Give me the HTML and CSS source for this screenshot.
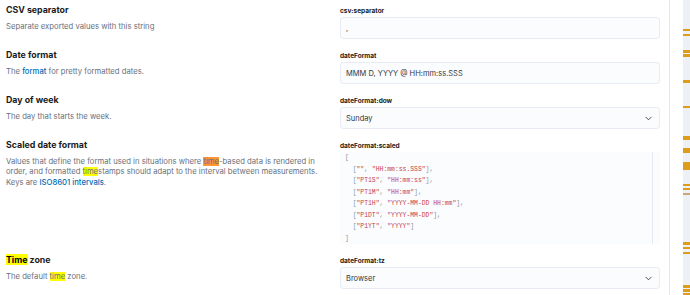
FILE: index.html
```html
<!DOCTYPE html>
<html lang="en">

<head>
    <meta charset="utf-8">
    <title>Advanced settings</title>
    <link rel="stylesheet" href="styles.css">
</head>

<body>
    <div class="page">
        <!-- settings list -->
        <div class="settings">

            <div class="row">
                <div class="info">
                    <h3 class="title">CSV separator</h3>
                    <p class="desc">Separate exported values with this string</p>
                </div>
                <div class="field">
                    <label class="label">csv:separator</label>
                    <div class="input">,</div>
                </div>
            </div>

            <div class="row">
                <div class="info">
                    <h3 class="title">Date format</h3>
                    <p class="desc">The <a href="#">format</a> for pretty formatted dates.</p>
                </div>
                <div class="field">
                    <label class="label">dateFormat</label>
                    <div class="input">MMM D, YYYY @ HH:mm:ss.SSS</div>
                </div>
            </div>

            <div class="row">
                <div class="info">
                    <h3 class="title">Day of week</h3>
                    <p class="desc">The day that starts the week.</p>
                </div>
                <div class="field">
                    <label class="label">dateFormat:dow</label>
                    <div class="input select">
                        <span>Sunday</span>
                        <svg class="chevron" viewBox="0 0 8 5" width="8" height="5"><path d="M0.7 0.7 L4 4 L7.3 0.7" /></svg>
                    </div>
                </div>
            </div>

            <div class="row">
                <div class="info">
                    <h3 class="title">Scaled date format</h3>
                    <p class="desc">Values that define the format used in situations where <mark class="cur">time</mark>-based data is rendered in order, and formatted <mark>time</mark>stamps should adapt to the interval between measurements. Keys are <a href="#">ISO8601 intervals</a>.</p>
                </div>
                <div class="field">
                    <label class="label">dateFormat:scaled</label>
                    <div class="code">
<pre><span class="p">[</span>
  <span class="p">[</span><span class="s">""</span><span class="p">,</span> <span class="s">"HH:mm:ss.SSS"</span><span class="p">],</span>
  <span class="p">[</span><span class="s">"PT1S"</span><span class="p">,</span> <span class="s">"HH:mm:ss"</span><span class="p">],</span>
  <span class="p">[</span><span class="s">"PT1M"</span><span class="p">,</span> <span class="s">"HH:mm"</span><span class="p">],</span>
  <span class="p">[</span><span class="s">"PT1H"</span><span class="p">,</span> <span class="s">"YYYY-MM-DD HH:mm"</span><span class="p">],</span>
  <span class="p">[</span><span class="s">"P1DT"</span><span class="p">,</span> <span class="s">"YYYY-MM-DD"</span><span class="p">],</span>
  <span class="p">[</span><span class="s">"P1YT"</span><span class="p">,</span> <span class="s">"YYYY"</span><span class="p">]</span>
<span class="p">]</span></pre>
                        <div class="gutter"></div>
                    </div>
                </div>
            </div>

            <div class="row">
                <div class="info">
                    <h3 class="title"><mark>Time</mark> zone</h3>
                    <p class="desc">The default <mark>time</mark> zone.</p>
                </div>
                <div class="field">
                    <label class="label">dateFormat:tz</label>
                    <div class="input select">
                        <span>Browser</span>
                        <svg class="chevron" viewBox="0 0 8 5" width="8" height="5"><path d="M0.7 0.7 L4 4 L7.3 0.7" /></svg>
                    </div>
                </div>
            </div>

        </div>

        <div class="divider"></div>

        <!-- scrollbar with find-in-page tick marks -->
        <div class="scrollbar">
            <i style="top:29px;height:2px"></i>
            <i style="top:34px;height:2px"></i>
            <i style="top:50px;height:3px"></i>
            <i style="top:54px;height:3px"></i>
            <i style="top:80px;height:3px"></i>
            <i style="top:106px;height:2px"></i>
            <i style="top:136px;height:4px"></i>
            <i style="top:148px;height:5px"></i>
            <i style="top:162px;height:8px"></i>
            <i style="top:184px;height:2px"></i>
            <i style="top:188px;height:2px"></i>
            <i class="light" style="top:193px;height:2px"></i>
            <i style="top:242px;height:3px"></i>
            <i style="top:247px;height:2px"></i>
            <i style="top:252px;height:2px"></i>
            <i style="top:285px;height:3px"></i>
            <i style="top:289px;height:3px"></i>
            <i style="top:293px;height:2px"></i>
        </div>
    </div>
</body>

</html>
```

FILE: styles.css
```css
body {
    margin: 0;
    padding: 0;
    background-color: #ffffff;
    font-family: Inter, "Noto Sans", sans-serif;
    color: #1a1c21;
}

.page {
    display: flex;
    height: 295px;
    overflow: hidden;
}

.settings {
    width: 654px;
    padding-left: 6px;
    padding-right: 9px;
}

.row {
    display: grid;
    grid-template-columns: 322px 320px;
    column-gap: 12px;
    padding-top: 5px;
    padding-bottom: 6px;
}

.title {
    margin: 0;
    font-size: 8.8px;
    line-height: 10px;
    font-weight: 700;
}

.desc {
    margin: 0;
    margin-top: 6.5px;
    font-size: 7.7px;
    line-height: 10.5px;
    color: #69707d;
}

a {
    color: #006bb8;
    text-decoration: none;
    font-weight: 500;
}

mark {
    background-color: #ffff00;
    color: inherit;
    line-height: 9px;
}

.title mark {
    color: #000000;
}

mark.cur {
    background-color: #ff9632;
}

.field {
    display: flex;
    flex-direction: column;
}

.label {
    font-size: 6.5px;
    line-height: 10px;
    font-weight: 700;
    margin-top: 1px;
    margin-bottom: 1px;
}

.input {
    height: 22px;
    box-sizing: border-box;
    background-color: #fbfcfd;
    border-radius: 4px;
    box-shadow: inset 0 0 0 1px rgba(17, 43, 134, 0.08);
    padding: 0 6px;
    display: flex;
    align-items: center;
    font-size: 7.5px;
    color: #343741;
}

.select {
    justify-content: space-between;
}

.chevron {
    width: 7px;
    height: 5px;
    margin-right: 2px;
}

.chevron path {
    fill: none;
    stroke: #343741;
    stroke-width: 1;
}

.code {
    position: relative;
    background-color: #fbfcfd;
    height: 92px;
}

.code pre {
    margin: 0;
    padding-left: 5px;
    font-family: "Liberation Mono", "DejaVu Sans Mono", monospace;
    font-size: 6.4px;
    line-height: 11.5px;
}

.p {
    color: #8b93a3;
}

.s {
    color: #c4424b;
}

.gutter {
    position: absolute;
    top: 0;
    bottom: 0;
    right: 7px;
    width: 1px;
    background-color: #e6e9ef;
}

.divider {
    width: 1px;
    background-color: #e4e7ec;
}

.scrollbar {
    position: relative;
    margin-left: 13px;
    width: 7px;
    background-color: #edf0f5;
}

.scrollbar i {
    position: absolute;
    left: 0;
    right: 0;
    background-color: #dd9d1c;
}

.scrollbar i.light {
    background-color: #c9a77a;
}
```
